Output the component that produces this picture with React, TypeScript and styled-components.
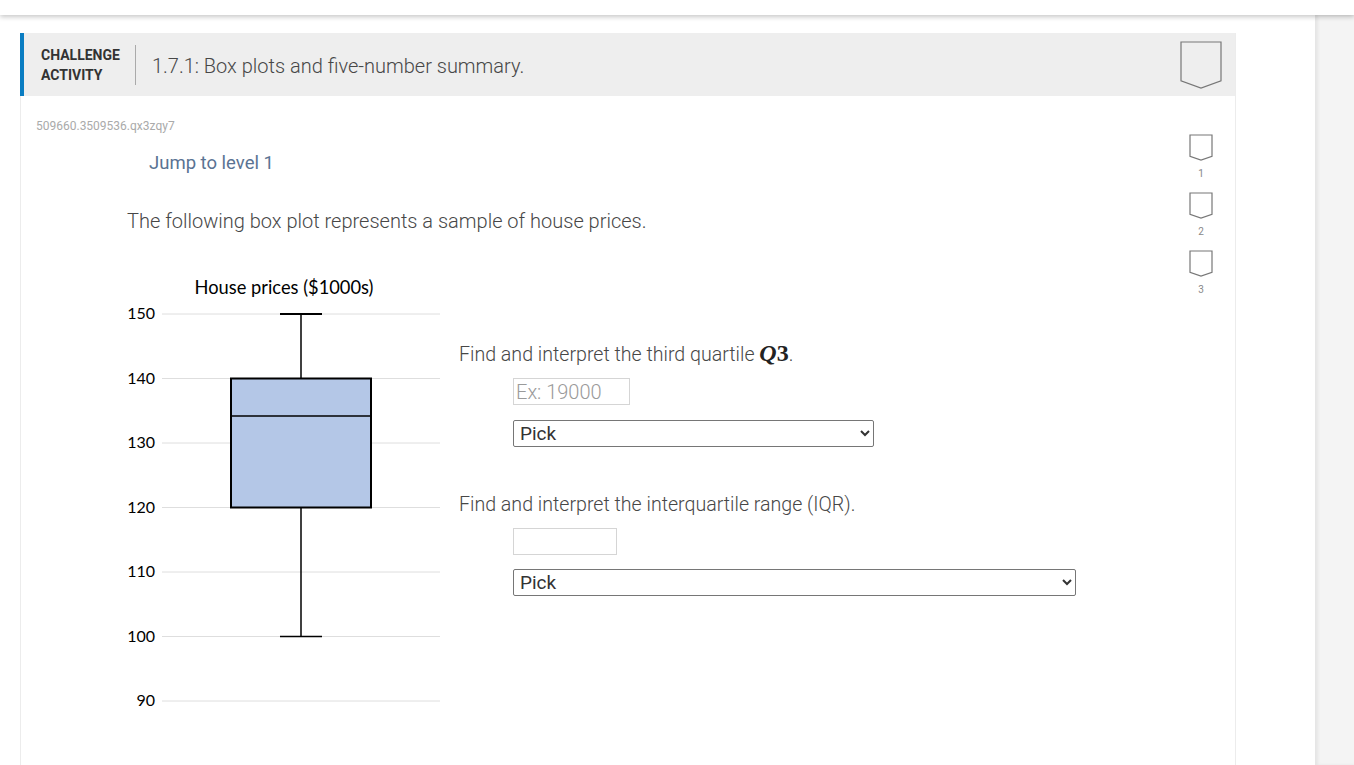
import styled, { createGlobalStyle } from "styled-components";

const GlobalStyle = createGlobalStyle`
  html, body {
    margin: 0;
    padding: 0;
    background: #ffffff;
    font-family: Roboto, "Liberation Sans", sans-serif;
    color: #333;
  }
  * { box-sizing: border-box; }
`;

const Page = styled.div`
  height: 765px;
  display: flex;
  flex-direction: column;
  overflow: hidden;
`;

const TopBar = styled.div`
  height: 15px;
  flex-shrink: 0;
  background: #fff;
  box-shadow: 0 2px 5px rgba(0, 0, 0, 0.22);
  position: relative;
  z-index: 2;
`;

const Main = styled.div`
  flex: 1;
  display: flex;
  min-height: 0;
`;

const Content = styled.div`
  flex: 1;
  padding: 18px 79px 0 20px;
`;

const Rail = styled.div`
  width: 39px;
  background: #f4f4f4;
  box-shadow: inset 2px 0 3px rgba(0, 0, 0, 0.06);
  border-left: 1px solid #e6e6e6;
`;

const Card = styled.section`
  border-left: 1px solid #ececec;
  border-right: 1px solid #ececec;
  height: 760px;
`;

const Header = styled.header`
  height: 63px;
  background: #eeeeee;
  border-left: 4px solid #0a7dc2;
  margin-left: -1px;
  display: flex;
  align-items: center;
  padding: 0 13px 0 17px;
`;

const Label = styled.div`
  font-family: Roboto, "Liberation Sans", sans-serif;
  font-weight: 700;
  font-size: 14px;
  line-height: 20px;
  color: #333;
  padding-right: 15px;
  border-right: 1px solid #aaa;
  height: 40px;
  display: flex;
  flex-direction: column;
  justify-content: center;
`;

const Title = styled.h1`
  flex: 1;
  margin: 0 0 0 16px;
  font-size: 20px;
  font-weight: 300;
  color: #474747;
  padding-top: 2px;
`;

const Bookmark = ({ w, h, stroke = "#777" }: { w: number; h: number; stroke?: string }) => (
  <svg width={w} height={h} viewBox={`0 0 ${w} ${h}`}>
    <path
      d={`M1 1 H${w - 1} V${h - h * 0.17} L${w / 2} ${h - 1} L1 ${h - h * 0.17} Z`}
      fill="none"
      stroke={stroke}
      strokeWidth="1.2"
    />
  </svg>
);

const Body = styled.div`
  display: flex;
`;

const Column = styled.div`
  flex: 1;
`;

const ActivityId = styled.div`
  font-size: 12px;
  line-height: 14px;
  color: #aaa;
  padding: 23px 0 0 15px;
`;

const JumpLink = styled.div`
  font-size: 18.5px;
  line-height: 24px;
  color: #5a7393;
  margin: 18px 0 0 128px;
`;

const Prompt = styled.p`
  font-size: 20px;
  font-weight: 300;
  line-height: 24px;
  color: #474747;
  margin: 34px 0 0 106px;
`;

const Workspace = styled.div`
  display: flex;
  margin: 40px 0 0 99px;
`;

const Questions = styled.div`
  padding: 68px 0 0 14px;
  display: flex;
  flex-direction: column;
`;

const Question = styled.div<{ $gap?: number }>`
  font-size: 19.6px;
  font-weight: 300;
  line-height: 24px;
  color: #474747;
  margin-top: ${(p) => p.$gap ?? 0}px;
`;

const Math = styled.span`
  font-family: "Liberation Serif", "DejaVu Serif", serif;
  font-size: 24px;
  font-weight: 700;
  color: #222;
  i { font-style: italic; }
`;

const Answer = styled.input<{ $w: number }>`
  width: ${(p) => p.$w}px;
  height: 27px;
  margin: 11px 0 0 54px;
  border: 1px solid #d5d5d5;
  font-family: Roboto, "Liberation Sans", sans-serif;
  font-size: 20px;
  font-weight: 300;
  padding: 0 2px;
  color: #333;
  outline: none;
  &::placeholder { color: #9a9a9a; }
`;

const Pick = styled.select<{ $w: number; $gap: number }>`
  width: ${(p) => p.$w}px;
  height: 27px;
  margin: ${(p) => p.$gap}px 0 0 54px;
  border: 1px solid #767676;
  border-radius: 2px;
  background: #fff;
  font-family: Roboto, "Liberation Sans", sans-serif;
  font-size: 19px;
  color: #333;
  padding: 0 2px;
`;

const Levels = styled.aside`
  width: 60px;
  padding-top: 38px;
  display: flex;
  flex-direction: column;
  align-items: center;
  margin-right: 4px;
`;

const Level = styled.div`
  display: flex;
  flex-direction: column;
  align-items: center;
  height: 58px;
`;

const LevelNum = styled.span`
  font-size: 10px;
  line-height: 12px;
  color: #888;
  margin-top: 7px;
`;

const ChartFont = "Lato, 'Open Sans', 'Liberation Sans', sans-serif";

function BoxPlot() {
  const y = (v: number) => 41 + (150 - v) * 6.45;
  const ticks = [150, 140, 130, 120, 110, 100, 90];
  return (
    <svg width="325" height="445" viewBox="0 0 325 445">
      <text x="164" y="21" textAnchor="middle" fontFamily={ChartFont} fontSize="18.3" fill="#000">
        House prices ($1000s)
      </text>
      {ticks.map((t) => (
        <g key={t}>
          <line x1="42" x2="320" y1={y(t)} y2={y(t)} stroke="#dedede" strokeWidth="1" />
          <text x="35" y={y(t) + 5} textAnchor="end" fontFamily={ChartFont} fontSize="16" fill="#000">
            {t}
          </text>
        </g>
      ))}
      <line x1="181" x2="181" y1={y(150)} y2={y(140)} stroke="#000" strokeWidth="1.5" />
      <line x1="181" x2="181" y1={y(120)} y2={y(100)} stroke="#000" strokeWidth="1.5" />
      <line x1="160" x2="202" y1={y(150)} y2={y(150)} stroke="#000" strokeWidth="2" />
      <line x1="160" x2="202" y1={y(100)} y2={y(100)} stroke="#000" strokeWidth="1.5" />
      <rect x="111" y={y(140)} width="140" height={y(120) - y(140)} fill="#b4c7e7" stroke="#000" strokeWidth="2" />
      <line x1="111" x2="251" y1={y(134.2)} y2={y(134.2)} stroke="#000" strokeWidth="1.5" />
    </svg>
  );
}

export default function App() {
  return (
    <Page>
      <GlobalStyle />
      <TopBar />
      <Main>
        <Content>
          <Card>
            <Header>
              <Label>
                <span>CHALLENGE</span>
                <span>ACTIVITY</span>
              </Label>
              <Title>1.7.1: Box plots and five-number summary.</Title>
              <Bookmark w={42} h={48} />
            </Header>
            <Body>
              <Column>
                <ActivityId>509660.3509536.qx3zqy7</ActivityId>
                <JumpLink>Jump to level 1</JumpLink>
                <Prompt>The following box plot represents a sample of house prices.</Prompt>
                <Workspace>
                  <BoxPlot />
                  <Questions>
                    <Question>
                      Find and interpret the third quartile{" "}
                      <Math>
                        <i>Q</i>3
                      </Math>
                      .
                    </Question>
                    <Answer $w={117} placeholder="Ex: 19000" />
                    <Pick $w={361} $gap={15} defaultValue="Pick">
                      <option>Pick</option>
                    </Pick>
                    <Question $gap={46}>Find and interpret the interquartile range (IQR).</Question>
                    <Answer $w={104} />
                    <Pick $w={563} $gap={14} defaultValue="Pick">
                      <option>Pick</option>
                    </Pick>
                  </Questions>
                </Workspace>
              </Column>
              <Levels>
                {[1, 2, 3].map((n) => (
                  <Level key={n}>
                    <Bookmark w={24} h={27} />
                    <LevelNum>{n}</LevelNum>
                  </Level>
                ))}
              </Levels>
            </Body>
          </Card>
        </Content>
        <Rail />
      </Main>
    </Page>
  );
}
